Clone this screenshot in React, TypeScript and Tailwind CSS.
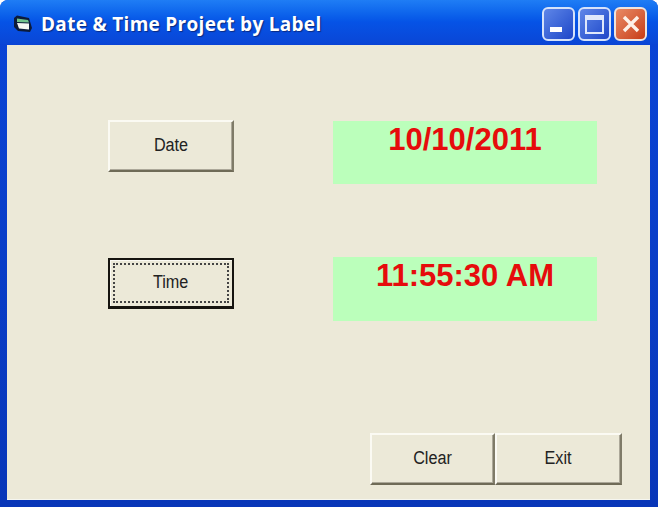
export default function App() {
  const btn = "h-[52px] pb-[2px] flex items-center justify-center bg-[#ece9d8] border-t-2 border-l-2 border-r-[2px] border-b-[2px] border-t-[#fbfaf3] border-l-[#fbfaf3] border-r-[#7f7b68] border-b-[#6f6b57] shadow-[inset_-1px_-1px_0_#aca899] text-[18px] text-[#222] font-['Liberation_Sans',sans-serif]";
  const lbl = "w-[264px] bg-[#bbffbb] text-center text-[#e60c0c] font-bold text-[31px] leading-none pt-[3px] font-['Liberation_Sans',sans-serif]";
  return (
    <div className="w-[658px] h-[507px] overflow-hidden flex flex-col rounded-t-[8px] bg-gradient-to-b from-[#0a45d8] to-[#0836b8]">
      <div className="h-[44px] shrink-0 flex items-center pt-[4px] pl-[13px] pr-[11px] bg-gradient-to-b from-[#1f7df5] via-[#0653e6] to-[#0a46d6]">
        <svg width="20" height="18" viewBox="0 0 20 18" className="shrink-0">
          <path d="M1 3 L4 0.5 L16 3 L19 13 L17 17 L5 16 L1 12 Z" fill="#0c1b3a" />
          <path d="M4 3.5 L15 5 L16 7.5 L4 7 Z" fill="#6fc18c" />
          <path d="M4 8 L16 8.5 L16 14.5 L6 13.5 Z" fill="#f4f6f2" />
        </svg>
        <span className="ml-[8px] mt-[1px] text-white font-bold text-[19px] leading-none tracking-[0.3px] [text-shadow:1px_1px_1px_#0a2a80] font-['Open_Sans',sans-serif] whitespace-nowrap">
          Date &amp; Time Project by Label
        </span>
        <div className="ml-auto flex items-center gap-[3px]">
          <div className="relative w-[33px] h-[34px] rounded-[6px] border-2 border-[#d5e2fa] bg-gradient-to-br from-[#5f86e8] to-[#1f45c8]">
            <div className="absolute left-[6px] bottom-[7px] w-[12px] h-[5px] bg-white" />
          </div>
          <div className="w-[33px] h-[34px] rounded-[6px] border-2 border-[#d5e2fa] bg-gradient-to-br from-[#5f86e8] to-[#1f45c8] flex items-center justify-center">
            <div className="w-[19px] h-[19px] border-2 border-t-[5px] border-[#dfe8fb]" />
          </div>
          <div className="w-[33px] h-[34px] rounded-[6px] border-2 border-[#eee4de] bg-gradient-to-br from-[#e88a64] to-[#c73a12] flex items-center justify-center">
            <svg width="20" height="20" viewBox="0 0 20 20">
              <path d="M3 3 L17 17 M17 3 L3 17" stroke="#fdf1e8" strokeWidth="3.4" />
            </svg>
          </div>
        </div>
      </div>

      <div className="ml-[7px] mr-[8px] mt-[1px] h-[455px] shrink-0 bg-[#ece9d8] flex flex-col pl-[101px] pt-[75px] border-b border-[#f5f6f0]">
        <div className="flex items-start gap-[99px]">
          <button className={btn + " w-[126px]"}><span className="[transform:scaleX(0.9)]">Date</span></button>
          <div className={lbl + " h-[63px] mt-[1px]"}>10/10/2011</div>
        </div>
        <div className="flex items-start gap-[99px] mt-[74px]">
          <div className="relative w-[126px] h-[51px] pb-[2px] bg-[#ece9d8] border-2 border-b-[3px] border-[#16140f] shadow-[inset_1px_1px_0_#fbfaf3] flex items-center justify-center text-[18px] text-[#222] font-['Liberation_Sans',sans-serif]">
            <span className="[transform:scaleX(0.9)]">Time</span>
            <div className="absolute inset-[3px] border-2 border-dotted border-[#444]" />
          </div>
          <div className={lbl + " h-[64px] -mt-[1px]"}>11:55:30 AM</div>
        </div>
        <div className="flex ml-[262px] mt-[112px]">
          <button className={btn + " w-[125px]"}><span className="[transform:scaleX(0.9)]">Clear</span></button>
          <button className={btn + " w-[127px]"}><span className="[transform:scaleX(0.9)]">Exit</span></button>
        </div>
      </div>
    </div>
  );
}
